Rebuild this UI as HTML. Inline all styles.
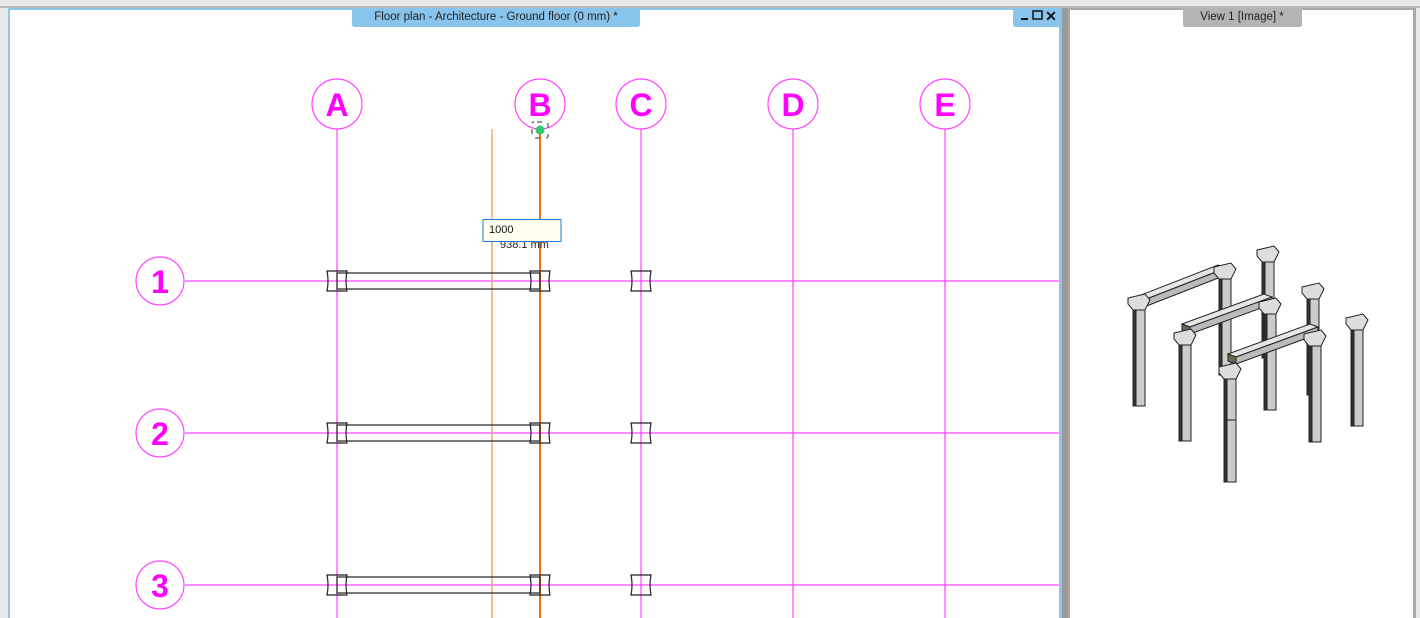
<!DOCTYPE html>
<html><head><meta charset="utf-8"><style>
html,body{margin:0;padding:0;width:1420px;height:618px;overflow:hidden;background:#f0f0f0;font-family:"Liberation Sans",sans-serif}
</style></head><body>
<svg width="1420" height="618" viewBox="0 0 1420 618" xmlns="http://www.w3.org/2000/svg" style="position:absolute;left:0;top:0">
<defs>
<g id="col"><path d="M-10,-10 H10 Q8,0 10,10 H-10 Q-8,0 -10,-10Z" fill="none" stroke="#222" stroke-width="1.2"/></g>
<g id="pil"><rect x="-6" y="0" width="12" height="100" fill="#ccc" stroke="#222" stroke-width="1"/><rect x="-6" y="0" width="3" height="100" fill="#333"/><path d="M-11,-8 L6,-12 L11,-6 L6,4 L-6,4 L-11,-2Z" fill="#ddd" stroke="#222"/></g>
</defs>
<rect x="0" y="0" width="1420" height="618" fill="#e8e8e8"/>
<rect x="0" y="6" width="1420" height="2" fill="#b8b8b8"/>
<rect x="8" y="8" width="1054" height="610" fill="#8ec6ea"/>
<rect x="10" y="10" width="1049" height="608" fill="#fff"/>
<rect x="1062" y="8" width="6" height="610" fill="#9a9a9a"/>
<rect x="1068" y="8" width="348" height="610" fill="#a8a8a8"/>
<rect x="1070" y="10" width="343" height="608" fill="#fff"/>
<path d="M352,8 H640 V24 Q640,27 637,27 H355 Q352,27 352,24Z" fill="#88c4ec"/>
<text x="496" y="20" font-size="11.5" text-anchor="middle" fill="#222">Floor plan - Architecture - Ground floor (0 mm) *</text>
<path d="M1013,8 H1062 V27 H1016 Q1013,27 1013,24Z" fill="#88c4ec"/>
<rect x="1021" y="18" width="7" height="2" fill="#111"/>
<rect x="1033" y="11" width="9" height="8" fill="none" stroke="#111" stroke-width="1.5"/>
<text x="1051" y="21" font-size="14" font-weight="bold" text-anchor="middle" fill="#111">✕</text>
<path d="M1183,8 H1302 V24 Q1302,27 1299,27 H1186 Q1183,27 1183,24Z" fill="#b4b4b4"/>
<text x="1242" y="20" font-size="11.5" text-anchor="middle" fill="#222">View 1 [Image] *</text>
<g stroke="#ff44ff" stroke-width="1.2" fill="none">
<line x1="337" y1="129" x2="337" y2="618"/><line x1="641" y1="129" x2="641" y2="618"/><line x1="793" y1="129" x2="793" y2="618"/><line x1="945" y1="129" x2="945" y2="618"/>
<line x1="185" y1="281" x2="1059" y2="281"/><line x1="185" y1="433" x2="1059" y2="433"/><line x1="185" y1="585" x2="1059" y2="585"/>
<circle cx="337" cy="104" r="25"/><circle cx="540" cy="104" r="25"/><circle cx="641" cy="104" r="25"/><circle cx="793" cy="104" r="25"/><circle cx="945" cy="104" r="25"/>
<circle cx="160" cy="281" r="24"/><circle cx="160" cy="433" r="24"/><circle cx="160" cy="585" r="24"/>
</g>
<g fill="#ff00ff" font-size="32" font-weight="bold" text-anchor="middle">
<text x="337" y="116">A</text><text x="540" y="116">B</text><text x="641" y="116">C</text><text x="793" y="116">D</text><text x="945" y="116">E</text>
<text x="160" y="293">1</text><text x="160" y="445">2</text><text x="160" y="597">3</text>
</g>
<line x1="492" y1="129" x2="492" y2="618" stroke="#f8a868" stroke-width="1.5"/>
<line x1="540" y1="133" x2="540" y2="618" stroke="#f07010" stroke-width="2"/>
<g fill="none" stroke="#222" stroke-width="1.2">
<rect x="337" y="273" width="203" height="16"/><rect x="337" y="425" width="203" height="16"/><rect x="337" y="577" width="203" height="16"/>
</g>
<use href="#col" x="337" y="281"/><use href="#col" x="540" y="281"/><use href="#col" x="641" y="281"/>
<use href="#col" x="337" y="433"/><use href="#col" x="540" y="433"/><use href="#col" x="641" y="433"/>
<use href="#col" x="337" y="585"/><use href="#col" x="540" y="585"/><use href="#col" x="641" y="585"/>
<rect x="532" y="122" width="16" height="16" rx="2" fill="none" stroke="#555" stroke-width="1.2" stroke-dasharray="5,6" stroke-dashoffset="-3"/>
<circle cx="540" cy="130" r="4.5" fill="#2ecc71"/>
<text x="500" y="248" font-size="11" fill="#222">938.1 mm</text>
<rect x="483" y="219.5" width="78" height="22" fill="#fffff0" stroke="#1f7ad6"/>
<text x="489" y="233" font-size="11" fill="#111">1000</text>
<g stroke="#222" stroke-width="1">
<path d="M1136,297 L1218,265 L1226,268 L1144,300Z" fill="#e6e6e6"/>
<path d="M1136,297 L1144,300 L1144,307 L1136,304Z" fill="#6a6a50"/>
<path d="M1144,300 L1226,268 L1226,275 L1144,307Z" fill="#bbb"/>
<use href="#pil" x="1268" y="258"/>
<use href="#pil" x="1313" y="295"/>
<use href="#pil" x="1225" y="275"/>
<use href="#pil" x="1139" y="306"/>
<path d="M1182,324 L1264,294 L1272,297 L1190,327Z" fill="#e6e6e6"/>
<path d="M1182,324 L1190,327 L1190,334 L1182,331Z" fill="#6a6a50"/>
<path d="M1190,327 L1272,297 L1272,304 L1190,334Z" fill="#bbb"/>
<use href="#pil" x="1270" y="310"/>
<use href="#pil" x="1357" y="326"/>
<use href="#pil" x="1185" y="341"/>
<path d="M1228,354 L1310,324 L1318,327 L1236,357Z" fill="#e6e6e6"/>
<path d="M1228,354 L1236,357 L1236,364 L1228,361Z" fill="#6a6a50"/>
<path d="M1236,357 L1318,327 L1318,334 L1236,364Z" fill="#bbb"/>
<use href="#pil" x="1315" y="342"/>
<use href="#pil" x="1230" y="375"/>
<rect x="1224" y="420" width="12" height="62" fill="#ccc"/><rect x="1224" y="420" width="3" height="62" fill="#333"/>
</g>
</svg>
</body></html>
